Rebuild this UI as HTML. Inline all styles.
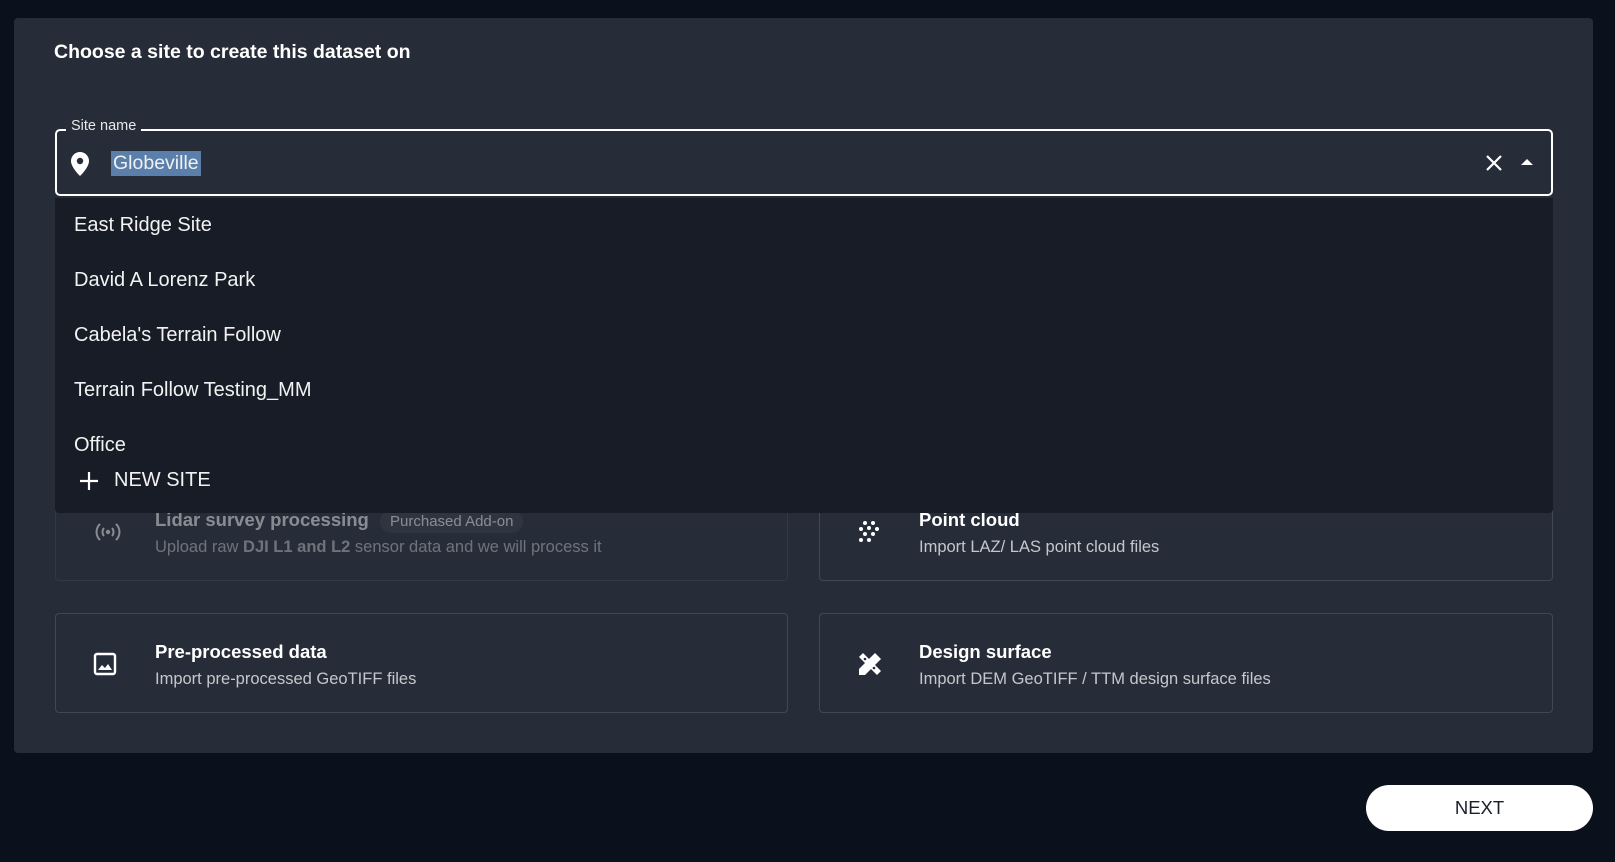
<!DOCTYPE html>
<html><head><style>
*{box-sizing:border-box;margin:0;padding:0}
body{width:1615px;height:862px;background:#0b111c;font-family:"Liberation Sans",sans-serif;color:#fff;position:relative;overflow:hidden}
.panel{position:absolute;left:14px;top:18px;width:1579px;height:735px;background:#272d38;border-radius:4px}
.title{position:absolute;left:54px;top:41px;font-size:19.5px;font-weight:bold}
.field{position:absolute;left:55px;top:129px;width:1498px;height:67px;border:2px solid #fff;border-radius:5px}
.label{position:absolute;left:66px;top:118px;font-size:14.5px;background:#272d38;padding:0 5px;color:#e8e8e8}
.sel{position:absolute;left:111px;top:151px;font-size:19.5px;background:#5b7fab;padding:1px 2px;color:#f0f0f0}
.dd{position:absolute;left:55px;top:198px;width:1498px;height:315px;background:#171c27;border-radius:0 0 4px 4px}
.it{position:absolute;left:74px;font-size:20px;color:#f2f2f2}
.card{position:absolute;height:100px;border:1px solid #414855;border-radius:4px}
.ct{position:absolute;left:99px;top:27px;font-size:18.5px;font-weight:bold}
.cs{position:absolute;left:99px;top:56px;font-size:16.5px;color:#c4c7cc}
.ic{position:absolute;left:38px;top:38px}
.next{position:absolute;left:1366px;top:785px;width:227px;height:46px;background:#fff;border-radius:23px;color:#1a1f2a;font-size:18.5px;text-align:center;line-height:46px}
</style></head><body>
<div class="panel"></div>
<div class="title">Choose a site to create this dataset on</div>
<div class="card" style="left:55px;top:481px;width:733px;opacity:.45">
 <svg class="ic" width="28" height="24" viewBox="0 0 28 24" style="top:38px"><g fill="none" stroke="#fff" stroke-width="2"><path d="M6 4a11 11 0 0 0 0 16M22 4a11 11 0 0 1 0 16M10 8a6 6 0 0 0 0 8M18 8a6 6 0 0 1 0 8"/></g><circle cx="14" cy="12" r="2.2" fill="#fff"/></svg>
 <div class="ct">Lidar survey processing <span style="font-weight:normal;font-size:15px;background:#3a404b;border-radius:12px;padding:3px 10px;margin-left:6px">Purchased Add-on</span></div>
 <div class="cs">Upload raw <b>DJI L1 and L2</b> sensor data and we will process it</div>
</div>
<div class="card" style="left:819px;top:481px;width:734px">
 <svg class="ic" width="24" height="24" viewBox="0 0 24 24" style="left:38px;top:38px"><g fill="#fff"><circle cx="7" cy="3" r="2"/><circle cx="15" cy="3" r="2"/><circle cx="3" cy="9" r="2"/><circle cx="11" cy="8" r="2"/><circle cx="19" cy="9" r="2"/><circle cx="7" cy="14" r="2"/><circle cx="15" cy="14" r="2"/><circle cx="3" cy="20" r="2"/><circle cx="11" cy="20" r="2"/></g></svg>
 <div class="ct">Point cloud</div>
 <div class="cs">Import LAZ/ LAS point cloud files</div>
</div>
<div class="card" style="left:55px;top:613px;width:733px">
 <svg class="ic" width="24" height="24" viewBox="0 0 24 24" style="left:37px;top:38px"><rect x="2" y="2" width="20" height="20" rx="2" fill="none" stroke="#fff" stroke-width="2.4"/><path d="M5 18l4-5 3 3 3-4 4 6z" fill="#fff"/></svg>
 <div class="ct">Pre-processed data</div>
 <div class="cs">Import pre-processed GeoTIFF files</div>
</div>
<div class="card" style="left:819px;top:613px;width:734px">
 <svg class="ic" width="26" height="26" viewBox="0 0 26 26" style="left:37px;top:37px"><g fill="#fff"><path d="M2 6l4-4 18 18-4 4z"/><path d="M18 2l6 6-16 16H2v-6z"/></g><g fill="#272d38"><circle cx="8" cy="8" r="1.3"/><circle cx="17" cy="17" r="1.3"/></g></svg>
 <div class="ct">Design surface</div>
 <div class="cs">Import DEM GeoTIFF / TTM design surface files</div>
</div>
<div class="field"></div>
<div class="label">Site name</div>
<svg style="position:absolute;left:70px;top:151px" width="20" height="26" viewBox="0 0 20 26"><path d="M10 1C5 1 1 5 1 10c0 6.5 9 15 9 15s9-8.5 9-15c0-5-4-9-9-9z" fill="#fff"/><circle cx="10" cy="10" r="3.2" fill="#272d38"/></svg>
<div class="sel">Globeville</div>
<svg style="position:absolute;left:1485px;top:154px" width="18" height="18" viewBox="0 0 18 18"><path d="M2 2l14 14M16 2L2 16" stroke="#fff" stroke-width="2.2"/></svg>
<svg style="position:absolute;left:1520px;top:158px" width="14" height="8" viewBox="0 0 14 8"><path d="M1 7l6-6 6 6z" fill="#fff"/></svg>
<div class="dd"></div>
<div class="it" style="top:214px">East Ridge Site</div>
<div class="it" style="top:269px">David A Lorenz Park</div>
<div class="it" style="top:324px">Cabela's Terrain Follow</div>
<div class="it" style="top:379px">Terrain Follow Testing_MM</div>
<div class="it" style="top:434px">Office</div>
<svg style="position:absolute;left:79px;top:471px" width="20" height="20" viewBox="0 0 20 20"><path d="M10 1v18M1 10h18" stroke="#fff" stroke-width="2.2"/></svg>
<div class="it" style="left:114px;top:469px">NEW SITE</div>
<div class="next">NEXT</div>
</body></html>
